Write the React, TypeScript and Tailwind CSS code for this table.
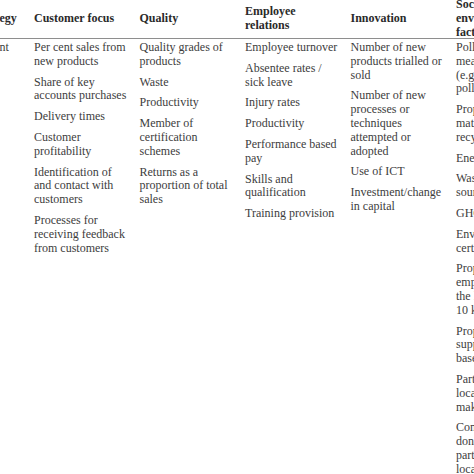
const COLUMNS: { title: string; items: string[] }[] = [
  {
    title: 'Business strategy',
    items: ['Vision statement', 'Business plan', 'Use of targets'],
  },
  {
    title: 'Customer focus',
    items: [
      'Per cent sales from new products',
      'Share of key accounts purchases',
      'Delivery times',
      'Customer profitability',
      'Identification of and contact with customers',
      'Processes for receiving feedback from customers',
    ],
  },
  {
    title: 'Quality',
    items: [
      'Quality grades of products',
      'Waste',
      'Productivity',
      'Member of certification schemes',
      'Returns as a proportion of total sales',
    ],
  },
  {
    title: 'Employee relations',
    items: [
      'Employee turnover',
      'Absentee rates / sick leave',
      'Injury rates',
      'Productivity',
      'Performance based pay',
      'Skills and qualification',
      'Training provision',
    ],
  },
  {
    title: 'Innovation',
    items: [
      'Number of new products trialled or sold',
      'Number of new processes or techniques attempted or adopted',
      'Use of ICT',
      'Investment/change in capital',
    ],
  },
];

const SOCIAL = {
  title: 'Social and environmental factors',
  items: [
    'Pollution control\nmeasures taken\n(e.g. emissions,\npollutants)',
    'Proportion of\nmaterials that are\nrecycled',
    'Energy use',
    'Waste by type and\nsource',
    'GHG emissions',
    'Environmental\ncertification',
    'Proportion of\nemployees within\nthe local area (e.g.\n10 km radius)',
    'Proportion of\nsuppliers that are\nbased locally',
    'Participation in\nlocal decision-\nmaking',
    'Contributions and\ndonations to\nparticular\nlocal causes',
  ],
};

export default function App() {
  return (
    <div className="w-[474px] h-[474px] overflow-hidden bg-white font-['Liberation_Serif','Times_New_Roman',serif] text-[12px] leading-[13.8px] text-[#3d3d3d]">
      <div className="w-[633px] -ml-[71.5px] -mt-[2px]">
        {/* Header */}
        <div className="grid grid-cols-[repeat(6,105.5px)] h-[40.5px] items-center border-b-[1.5px] border-[#8e8e8e]">
          {COLUMNS.map((c) => (
            <div key={c.title} className="pr-[10.5px] font-bold text-[#2a2a2a]">
              {c.title}
            </div>
          ))}
          <div className="pr-[10.5px] font-bold text-[#2a2a2a]">{SOCIAL.title}</div>
        </div>

        {/* Body */}
        <div className="grid grid-cols-[repeat(6,105.5px)] items-start pt-[2.5px]">
          {COLUMNS.map((c) => (
            <div key={c.title} className="flex flex-col gap-[7px] pr-[10.5px]">
              {c.items.map((it) => (
                <div key={it}>{it}</div>
              ))}
            </div>
          ))}
          <div className="flex flex-col gap-[7px] pr-[10.5px]">
            {SOCIAL.items.map((it) => (
              <div key={it} className="whitespace-pre-line">
                {it}
              </div>
            ))}
          </div>
        </div>
      </div>
    </div>
  );
}
